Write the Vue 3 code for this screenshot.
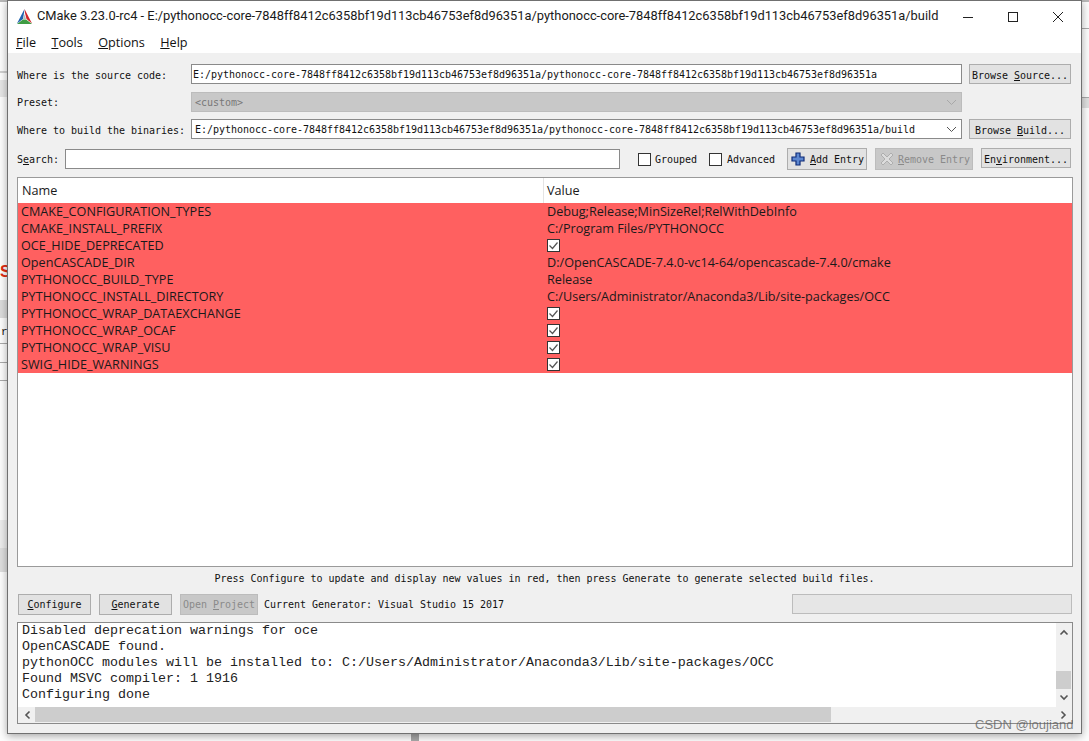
<script setup>
const path = 'E:/pythonocc-core-7848ff8412c6358bf19d113cb46753ef8d96351a/pythonocc-core-7848ff8412c6358bf19d113cb46753ef8d96351a'
const entries = [
  { name: 'CMAKE_CONFIGURATION_TYPES', value: 'Debug;Release;MinSizeRel;RelWithDebInfo' },
  { name: 'CMAKE_INSTALL_PREFIX', value: 'C:/Program Files/PYTHONOCC' },
  { name: 'OCE_HIDE_DEPRECATED', check: true },
  { name: 'OpenCASCADE_DIR', value: 'D:/OpenCASCADE-7.4.0-vc14-64/opencascade-7.4.0/cmake' },
  { name: 'PYTHONOCC_BUILD_TYPE', value: 'Release' },
  { name: 'PYTHONOCC_INSTALL_DIRECTORY', value: 'C:/Users/Administrator/Anaconda3/Lib/site-packages/OCC' },
  { name: 'PYTHONOCC_WRAP_DATAEXCHANGE', check: true },
  { name: 'PYTHONOCC_WRAP_OCAF', check: true },
  { name: 'PYTHONOCC_WRAP_VISU', check: true },
  { name: 'SWIG_HIDE_WARNINGS', check: true }
]
const log = [
  'Disabled deprecation warnings for oce',
  'OpenCASCADE found.',
  'pythonOCC modules will be installed to: C:/Users/Administrator/Anaconda3/Lib/site-packages/OCC',
  'Found MSVC compiler: 1 1916',
  'Configuring done'
]
</script>

<template>
  <div class="desktop">
    <div class="bg bg-top"></div>
    <div class="bg bg-left-a"></div>
    <div class="bg bg-left-b"></div>
    <div class="bg bg-left-c"></div>
    <div class="bg bg-left-d"></div>
    <div class="bg bg-left-e"></div>
    <div class="bg bg-left-f"></div>
    <div class="bg bg-left-g"></div>
    <div class="bg bg-right-a"></div>
    <div class="bg bg-right-b"></div>
    <div class="bg bg-post"></div>
    <span class="bg bg-s">S</span>
    <span class="bg bg-r">r</span>

    <div class="window">
      <header class="titlebar">
        <svg class="logo" width="17" height="17" viewBox="0 0 17 17">
          <polygon points="8.5,1 1,15.5 7,11 8,5" fill="#1f62b0" />
          <polygon points="8.5,1 16,15.5 10.5,11 9,5" fill="#d2232a" />
          <polygon points="1,16 16,16 10,11.5 7,11.5" fill="#3f9c44" />
          <polygon points="8.4,6 10,11 7.2,11" fill="#b8b8b8" />
        </svg>
        <span class="title">CMake 3.23.0-rc4 - {{ path }}/build</span>
        <div class="controls">
          <svg width="12" height="12" viewBox="0 0 12 12"><path d="M1 6.5h10" stroke="#222" fill="none" /></svg>
          <svg width="12" height="12" viewBox="0 0 12 12"><rect x="1.5" y="1.5" width="9" height="9" stroke="#222" fill="none" /></svg>
          <svg width="12" height="12" viewBox="0 0 12 12"><path d="M1 1l10 10M11 1L1 11" stroke="#222" fill="none" /></svg>
        </div>
      </header>
      <nav class="menubar">
        <span><u>F</u>ile</span>
        <span><u>T</u>ools</span>
        <span><u>O</u>ptions</span>
        <span><u>H</u>elp</span>
      </nav>

      <main class="content">
        <div class="form">
          <label class="mono">Where is the source code:</label>
          <div class="field mono">{{ path }}</div>
          <button class="btn mono">Browse <u>S</u>ource...</button>

          <label class="mono">Preset:</label>
          <div class="field combo disabled mono">&lt;custom&gt;
            <svg class="chevron" width="11" height="7" viewBox="0 0 11 7"><path d="M1 1l4.5 4.5L10 1" stroke="#a8a8a8" fill="none" /></svg>
          </div>
          <span></span>

          <label class="mono">Where to build the binaries:</label>
          <div class="field combo mono tight">{{ path }}/build
            <svg class="chevron" width="11" height="7" viewBox="0 0 11 7"><path d="M1 1l4.5 4.5L10 1" stroke="#555" fill="none" /></svg>
          </div>
          <button class="btn mono">Browse <u>B</u>uild...</button>
        </div>

        <div class="search-row mono">
          <label>S<u>e</u>arch:</label>
          <div class="field search"></div>
          <span class="box grouped"></span><span>Grouped</span>
          <span class="box advanced"></span><span>Advanced</span>
          <button class="btn add">
            <svg width="14" height="14" viewBox="0 0 14 14"><path d="M5 1h4v4h4v4H9v4H5V9H1V5h4z" fill="#5c86cf" stroke="#0d2a78" stroke-width="1.2" /></svg>
            <span><u>A</u>dd Entry</span>
          </button>
          <button class="btn remove off">
            <svg width="14" height="14" viewBox="0 0 14 14"><path d="M1 3l2-2 4 4 4-4 2 2-4 4 4 4-2 2-4-4-4 4-2-2 4-4z" fill="#dcdcdc" stroke="#aeaeae" /></svg>
            <span><u>R</u>emove Entry</span>
          </button>
          <button class="btn env">En<u>v</u>ironment...</button>
        </div>

        <section class="table">
          <div class="thead ui">
            <div class="th-name">Name</div>
            <div class="th-value">Value</div>
          </div>
          <div v-for="e in entries" :key="e.name" class="row ui">
            <div class="cell-name">{{ e.name }}</div>
            <div class="cell-value">
              <svg v-if="e.check" class="tick" width="13" height="13" viewBox="0 0 13 13">
                <rect x="0.5" y="0.5" width="12" height="12" fill="#fff" stroke="#333" />
                <path d="M2.5 6.5l3 3 5-6" stroke="#555" stroke-width="1.2" fill="none" />
              </svg>
              <span v-else class="value-text">{{ e.value }}</span>
            </div>
          </div>
        </section>

        <p class="status mono">Press Configure to update and display new values in red, then press Generate to generate selected build files.</p>

        <div class="actions mono">
          <button class="btn act"><u>C</u>onfigure</button>
          <button class="btn act"><u>G</u>enerate</button>
          <button class="btn act open off">Open <u>P</u>roject</button>
          <span class="generator">Current Generator: Visual Studio 15 2017</span>
          <div class="progress"></div>
        </div>

        <section class="log">
          <div class="log-main">
            <pre class="log-text"><div v-for="l in log" :key="l">{{ l }}</div></pre>
            <div class="vbar">
              <svg width="10" height="7" viewBox="0 0 10 7"><path d="M1.5 5.5L5 2l3.5 3.5" stroke="#555" stroke-width="1.6" fill="none" /></svg>
              <div class="vtrack"><div class="vthumb"></div></div>
              <svg width="10" height="7" viewBox="0 0 10 7"><path d="M1.5 1.5L5 5l3.5-3.5" stroke="#555" stroke-width="1.6" fill="none" /></svg>
            </div>
          </div>
          <div class="hbar">
            <svg width="7" height="10" viewBox="0 0 7 10"><path d="M5.5 1.5L2 5l3.5 3.5" stroke="#555" stroke-width="1.6" fill="none" /></svg>
            <div class="htrack"><div class="hthumb"></div></div>
            <svg width="7" height="10" viewBox="0 0 7 10"><path d="M1.5 1.5L5 5 1.5 8.5" stroke="#555" stroke-width="1.6" fill="none" /></svg>
          </div>
        </section>
      </main>
    </div>

    <span class="watermark">CSDN @loujiand</span>
  </div>
</template>

<style>
html, body { margin: 0; background: #fff; overflow: hidden; }
</style>

<style scoped>
* { box-sizing: border-box; }
.desktop {
  position: relative;
  width: 1089px;
  height: 741px;
  overflow: hidden;
  background: #fdfdfd;
  font-family: "Open Sans", "Noto Sans", sans-serif;
  color: #111;
}
.bg { position: absolute; }
.bg-top { left: 0; right: 0; top: 0; height: 2px; background: #b8b8b8; }
.bg-left-a { left: 0; width: 7px; top: 71px; height: 2px; background: #d0d0d0; }
.bg-left-b { left: 0; width: 7px; top: 80px; height: 17px; background: #e6e6e6; }
.bg-left-c { left: 0; width: 7px; top: 300px; height: 18px; background: #dcdcdc; }
.bg-left-d { left: 0; width: 7px; top: 343px; height: 1px; background: #aaa; }
.bg-left-e { left: 0; width: 7px; top: 362px; height: 1px; background: #aaa; }
.bg-left-f { left: 0; width: 7px; top: 380px; height: 1px; background: #aaa; }
.bg-left-g { left: 0; width: 7px; top: 520px; height: 52px; background: #ededed; border-bottom: 24px solid #dedede; }
.bg-right-a { left: 1082px; right: 0; top: 28px; height: 1px; background: #aaa; }
.bg-right-b { left: 1082px; right: 0; top: 97px; height: 11px; background: #e0e0e0; border-top: 1px solid #aaa; }
.bg-post { left: 411px; width: 8px; top: 733px; height: 8px; background: #a8a8a8; }
.bg-s { left: 0; top: 263px; color: #e02a10; font: 700 16px "Liberation Sans", sans-serif; }
.bg-r { left: 1px; top: 326px; font: 11px "Liberation Mono", monospace; }

.window {
  position: absolute;
  left: 7px;
  top: 0;
  width: 1075px;
  height: 734px;
  display: flex;
  flex-direction: column;
  background: #f0f0f0;
  border: 1px solid #707070;
  box-shadow: 0 2px 8px rgba(0, 0, 0, 0.35);
}
.titlebar {
  height: 31px;
  flex: none;
  display: flex;
  align-items: center;
  background: #fff;
  padding-left: 8px;
  position: relative;
}
.logo { margin-right: 4px; flex: none; }
.title {
  font-family: Roboto, "Open Sans", sans-serif;
  font-size: 12.86px;
  color: #1a1a1a;
  white-space: nowrap;
  position: relative;
  top: -1px;
}
.controls {
  margin-left: auto;
  display: flex;
  gap: 33px;
  padding-right: 17px;
  flex: none;
}
.menubar {
  height: 21px;
  flex: none;
  background: #fff;
  display: flex;
  align-items: center;
  padding: 0 0 2px 8px;
  gap: 15.4px;
  font-size: 12.65px;
}
.content {
  flex: 1;
  min-height: 0;
  display: flex;
  flex-direction: column;
  padding: 11px 9px 9px 9px;
}
.mono {
  font-family: "DejaVu Sans Mono", "Liberation Mono", monospace;
  font-size: 10px;
  letter-spacing: -0.02px;
  color: #111;
}
.ui { font-size: 12.65px; color: #1a1a1a; }
button { padding: 0; margin: 0; }

.form {
  display: grid;
  grid-template-columns: 174px 771px 102px;
  grid-template-rows: 20px 20px 20px;
  column-gap: 0;
  row-gap: 7.5px;
  align-items: center;
}
.form label { padding-top: 2px; }
.form .btn { margin-left: 7px; width: 102px; height: 20px; padding-top: 2px; }
.field {
  height: 20px;
  background: #fff;
  border: 1px solid #8a8a8a;
  padding-left: 1px;
  display: flex;
  align-items: center;
  white-space: nowrap;
  overflow: hidden;
  position: relative;
}
.tight { padding-left: 3px; }
.combo .chevron { position: absolute; right: 4px; top: 6px; }
.disabled { background: #c8c8c8; border-color: #bcbcbc; color: #777; padding-top: 2px; padding-left: 3px; }
.btn {
  background: #e2e2e2;
  border: 1px solid #adadad;
  font-family: "DejaVu Sans Mono", "Liberation Mono", monospace;
  font-size: 10px;
  letter-spacing: -0.02px;
  color: #111;
  white-space: nowrap;
}
.off { background: #c8c8c8; border-color: #bcbcbc; color: #8a8a8a; }

.search-row {
  display: flex;
  align-items: center;
  height: 22px;
  margin-top: 9px;
}
.search-row label { width: 48px; }
.search { width: 555px; }
.box {
  width: 13px;
  height: 13px;
  background: #fff;
  border: 1px solid #333;
  margin-right: 4px;
}
.grouped { margin-left: 18px; }
.advanced { margin-left: 12px; margin-right: 5px; }
.add, .remove {
  height: 22px;
  display: flex;
  align-items: center;
  padding-left: 3px;
}
.add { width: 80px; margin-left: 12px; gap: 5px; }
.remove { width: 98px; margin-left: 8px; padding-left: 4px; gap: 4px; }
.env { width: 90px; height: 20px; margin-left: 8px; align-self: flex-start; padding-top: 2px; }

.table {
  height: 390px;
  flex: none;
  margin-top: 7px;
  margin-right: -1px;
  background: #fff;
  border: 1px solid #9a9a9a;
}
.thead { display: flex; height: 25px; align-items: center; background: #fff; }
.th-name { width: 526px; padding: 0 0 2px 4px; height: 100%; display: flex; align-items: center; border-right: 1px solid #e4e4e4; }
.th-value { padding: 0 0 2px 3px; }
.row { display: flex; height: 17px; align-items: center; background: #ff6060; white-space: nowrap; }
.cell-name { width: 529px; padding: 0 0 0 3px; line-height: 15px; }
.cell-value { display: flex; align-items: center; }
.value-text { line-height: 15px; }

.status { margin: 5px 0 0; height: 13px; line-height: 13px; text-align: center; }

.actions {
  display: flex;
  align-items: center;
  height: 21px;
  margin-top: 9px;
  padding-left: 1px;
}
.act { width: 73px; height: 21px; margin-right: 8px; }
.open { width: 78px; margin-right: 6px; }
.progress {
  margin-left: auto;
  width: 280px;
  height: 20px;
  background: #e6e6e6;
  border: 1px solid #bcbcbc;
  align-self: flex-start;
}

.log {
  height: 102px;
  flex: none;
  margin-top: 7px;
  margin-right: -1px;
  background: #f0f0f0;
  border: 1px solid #8a8a8a;
  display: flex;
  flex-direction: column;
}
.log-main { flex: 1; display: flex; min-height: 0; }
.log-text {
  flex: 1;
  margin: 0;
  padding: 0 0 0 4px;
  background: #fff;
  font-family: "Liberation Mono", monospace;
  font-size: 13.33px;
  line-height: 16px;
  color: #222;
  overflow: hidden;
}
.vbar {
  width: 16px;
  display: flex;
  flex-direction: column;
  align-items: center;
  padding: 6px 1px 6px 0;
  background: #f0f0f0;
}
.vtrack { flex: 1; width: 100%; position: relative; }
.vthumb { position: absolute; left: 0; width: 100%; top: 35px; height: 18px; background: #cdcdcd; }
.hbar {
  height: 16px;
  flex: none;
  display: flex;
  align-items: center;
  padding: 0 5px 1px 6px;
  background: #f0f0f0;
}
.htrack { flex: 1; height: 100%; position: relative; margin: 0 6px 0 4px; }
.hthumb { position: absolute; left: 0; top: 0; height: 100%; width: 796px; background: #cdcdcd; }

.watermark {
  position: absolute;
  left: 975px;
  top: 717px;
  font-family: "Liberation Sans", sans-serif;
  font-size: 13px;
  color: rgba(90, 90, 90, 0.75);
}
</style>
